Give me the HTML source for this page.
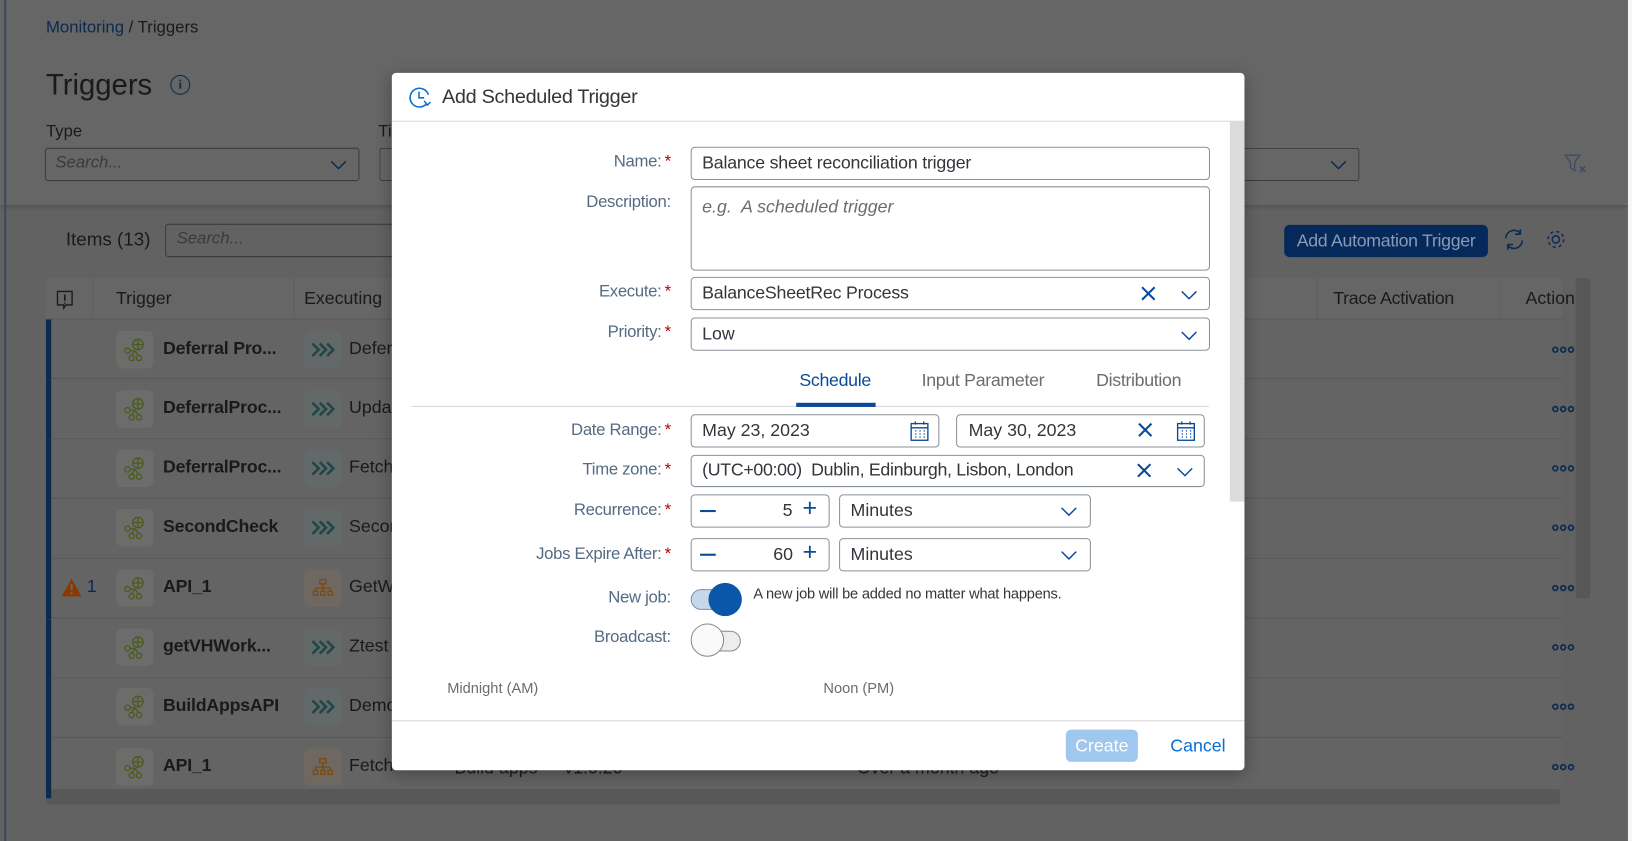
<!DOCTYPE html>
<html><head><meta charset="utf-8"><style>
*{box-sizing:border-box;margin:0;padding:0}
body{width:1632px;height:841px;overflow:hidden;background:#626262;font-family:"Liberation Sans",sans-serif}
#w{position:absolute;left:0;top:0;width:1562px;height:808px;transform:scale(1.0449,1.0408);transform-origin:0 0;background:#626262}
.a{position:absolute}
.t{position:absolute;white-space:nowrap}
.inp{position:absolute;border:1px solid #89919a;border-radius:4px;background:#fff}
.binp{position:absolute;border:1px solid #3a3d40;border-radius:3px}
.lbl{position:absolute;right:920px;font-size:16px;color:#556b82;text-align:right;white-space:nowrap;letter-spacing:-0.3px}
.lbl b{color:#bb0000;font-weight:normal;margin-left:3px}
.row{position:absolute;left:44px;width:1451px;height:57px;border-bottom:1px solid #5a5a5a;background:#646464}
.row .bar{position:absolute;left:0;top:0;width:5px;height:58px;background:#0a2a50}
.ic{position:absolute;width:36px;height:36px;border-radius:6px;background:#6c6c6a}
.nm{position:absolute;font-size:17px;font-weight:bold;color:#1a1a1a;letter-spacing:-0.2px}
.ex{position:absolute;font-size:17px;color:#1a1a1a}
</style></head><body><div id="w">
<div class="a" style="left:0;top:0;width:1562px;height:197px;background:#666;box-shadow:0 2px 4px rgba(0,0,0,.15)"></div>
<div class="a" style="left:4px;top:0;width:2px;height:808px;background:#3c4a5c"></div>
<div class="a" style="left:1558px;top:0;width:4px;height:808px;background:#f5f6f7"></div>
<div class="t" style="left:44px;top:18px;font-size:16px;color:#0a2a50">Monitoring <span style="color:#1a1a1a">/ Triggers</span></div>
<div class="t" style="left:44px;top:66px;font-size:28px;color:#1a1a1a">Triggers</div>
<div class="a" style="left:163px;top:72px;width:19px;height:19px;border:1.5px solid #0a2a50;border-radius:50%;font:bold 12px 'Liberation Serif',serif;color:#0a2a50;text-align:center;line-height:16px">i</div>
<div class="t" style="left:44px;top:118px;font-size:16px;color:#1a1a1a">Type</div>
<div class="t" style="left:362px;top:118px;font-size:16px;color:#1a1a1a">Ti</div>
<div class="binp" style="left:43px;top:142px;width:301px;height:32px"></div>
<div class="t" style="left:53px;top:148px;font-size:16px;font-style:italic;color:#3a3a3a">Search...</div>
<svg class="a" style="left:316px;top:152px" width="16" height="12"><path d="M1 3l7 7 7-7" fill="none" stroke="#0a2a50" stroke-width="1.4"/></svg>
<div class="binp" style="left:363px;top:142px;width:20px;height:32px;border-right:none"></div>
<div class="binp" style="left:1150px;top:142px;width:151px;height:32px;border-left:none"></div>
<svg class="a" style="left:1273px;top:152px" width="16" height="12"><path d="M1 3l7 7 7-7" fill="none" stroke="#0a2a50" stroke-width="1.4"/></svg>
<svg class="a" style="left:1497px;top:147px" width="22" height="20"><path d="M1 2h14l-5 7v8l-4-3V9z" fill="none" stroke="#3a4a60" stroke-width="1.2"/><path d="M15 13l5 5M20 13l-5 5" stroke="#3a4a60" stroke-width="1.4"/></svg>
<div class="t" style="left:63px;top:220px;font-size:18px;color:#1a1a1a">Items (13)</div>
<div class="binp" style="left:158px;top:215px;width:230px;height:32px"></div>
<div class="t" style="left:169px;top:221px;font-size:16px;font-style:italic;color:#3a3a3a">Search...</div>
<div class="a" style="left:1229px;top:216px;width:195px;height:31px;background:#05295a;border-radius:5px;color:#8a9ab0;font-size:17px;text-align:center;line-height:31px;letter-spacing:-0.3px">Add Automation Trigger</div>
<svg class="a" style="left:1437px;top:218px" width="24" height="24"><path d="M4 11a8 8 0 0 1 14-5M20 13a8 8 0 0 1-14 5" fill="none" stroke="#0a2a50" stroke-width="1.5"/><path d="M18 2v5h-5M6 22v-5h5" fill="none" stroke="#0a2a50" stroke-width="1.5"/></svg>
<svg class="a" style="left:1478px;top:219px" width="22" height="22"><circle cx="11" cy="11" r="3.5" fill="none" stroke="#0a2a50" stroke-width="1.4"/><circle cx="11" cy="11" r="7.5" fill="none" stroke="#0a2a50" stroke-width="1.4" stroke-dasharray="3 2.9"/></svg>
<div class="a" style="left:44px;top:267px;width:1451px;height:40px;background:#666;border-bottom:1px solid #5a5a5a"></div>
<div class="a" style="left:88px;top:267px;width:1px;height:40px;background:#5e5e5e"></div>
<div class="a" style="left:281px;top:267px;width:1px;height:40px;background:#5e5e5e"></div>
<div class="a" style="left:1260px;top:267px;width:1px;height:40px;background:#5e5e5e"></div>
<div class="a" style="left:1435px;top:267px;width:1px;height:40px;background:#5e5e5e"></div>
<svg class="a" style="left:53px;top:278px" width="18" height="20"><path d="M2 2h14v13H10l-2 3v-3H2z" fill="none" stroke="#1a1a1a" stroke-width="1.3"/><path d="M9 5v6M9 12.5v1.2" stroke="#1a1a1a" stroke-width="1.6"/></svg>
<div class="t" style="left:111px;top:277px;font-size:17px;color:#1a1a1a">Trigger</div>
<div class="t" style="left:291px;top:277px;font-size:17px;color:#1a1a1a">Executing</div>
<div class="t" style="left:1276px;top:277px;font-size:17px;color:#1a1a1a;letter-spacing:-0.3px">Trace Activation</div>
<div class="a" style="left:1460px;top:267px;width:48px;height:40px;overflow:hidden"><div class="t" style="left:0;top:10px;font-size:17px;color:#1a1a1a">Actions</div></div>
<div class="a" style="left:1508px;top:267px;width:14px;height:308px;background:#575757;border-radius:3px"></div>
<div class="a" style="left:44px;top:759px;width:1449px;height:14px;background:#585858;border-radius:3px"></div>

<div class="row" style="top:307px"><div class="bar"></div></div>
<div class="row" style="top:365px"><div class="bar"></div></div>
<div class="row" style="top:422px"><div class="bar"></div></div>
<div class="row" style="top:480px"><div class="bar"></div></div>
<div class="row" style="top:537px"><div class="bar"></div></div>
<div class="row" style="top:595px"><div class="bar"></div></div>
<div class="row" style="top:652px"><div class="bar"></div></div>
<div class="row" style="top:709px;height:50px"><div class="bar"></div></div>

<div id="rows"></div>
<script>
var d=[["Deferral Pro...","Defer",0,336],["DeferralProc...","Upda",0,393],["DeferralProc...","Fetch",0,450],["SecondCheck","Secon",0,507],["API_1","GetW",1,565],["getVHWork...","Ztest",0,622],["BuildAppsAPI","Demo",0,679],["API_1","Fetch",1,737]];
var h="";d.forEach(function(r){var c=r[3];
h+='<div class="ic" style="left:111px;top:'+(c-18)+'px"></div><svg class="a" style="left:117px;top:'+(c-12)+'px" width="24" height="24" fill="none" stroke="#4a5a18" stroke-width="1.2"><circle cx="15" cy="7" r="5"/><path d="M10 7h10M15 2v10"/><circle cx="5" cy="13" r="2.5"/><circle cx="9" cy="20" r="2.5"/><circle cx="16" cy="20" r="2.5"/><path d="M7 13h5M12 13l-3 5M12 13l4 5"/></svg>';
h+='<div class="nm" style="left:156px;top:'+(c-11)+'px">'+r[0]+'</div>';
h+='<div class="ic" style="left:291px;top:'+(c-18)+'px;background:'+(r[2]?'#6e6860':'#636868')+'"></div>';
if(r[2])h+='<svg class="a" style="left:299px;top:'+(c-9)+'px" width="20" height="18" fill="none" stroke="#7a4a10" stroke-width="1.2"><rect x="7" y="1" width="6" height="4"/><path d="M10 5v4M3 9h14M3 9v3M10 9v3M17 9v3"/><rect x="1" y="12" width="4" height="4"/><rect x="8" y="12" width="4" height="4"/><rect x="15" y="12" width="4" height="4"/></svg>';
else h+='<svg class="a" style="left:297px;top:'+(c-8)+'px" width="24" height="16" fill="none" stroke="#1f4646" stroke-width="2.4"><path d="M2 2l6 6-6 6M9 2l6 6-6 6M16 2l6 6-6 6"/></svg>';
h+='<div class="ex" style="left:334px;top:'+(c-11)+'px">'+r[1]+'</div>';
h+='<svg class="a" style="left:1485px;top:'+(c-4)+'px" width="22" height="8" fill="none" stroke="#0a2a50" stroke-width="1.6"><circle cx="3.5" cy="4" r="2.3"/><circle cx="11" cy="4" r="2.3"/><circle cx="18.5" cy="4" r="2.3"/></svg>';});
document.getElementById("rows").innerHTML=h;
</script>
<svg class="a" style="left:58px;top:555px" width="21" height="19"><path d="M10.5 1L20 18H1z" fill="#8a3a00"/><path d="M10.5 6v6M10.5 14v2" stroke="#666" stroke-width="2"/></svg>
<div class="t" style="left:83px;top:554px;font-size:17px;color:#0a2a50">1</div>
<div class="t" style="left:435px;top:728px;font-size:17px;color:#1a1a1a">Build apps</div>
<div class="t" style="left:540px;top:728px;font-size:17px;color:#1a1a1a">v1.0.20</div>
<div class="t" style="left:820px;top:728px;font-size:17px;color:#1a1a1a">Over a month ago</div>

<!-- modal -->
<div class="a" style="left:375px;top:70px;width:816px;height:670px;background:#fff;border-radius:4px;box-shadow:0 4px 16px rgba(0,0,0,.3);overflow:hidden">
<div class="a" style="left:0;top:0;width:816px;height:47px;border-bottom:1px solid #d9d9d9"></div>
<svg class="a" style="left:16px;top:13px" width="22" height="22" fill="none" stroke="#0a6ed1" stroke-width="1.5"><path d="M17 17A9 9 0 1 1 19 8"/><path d="M10 5v6h5"/><path d="M15 14l3 4 3-3" /></svg>
<div class="t" style="left:48px;top:13px;font-size:19px;color:#32363a;letter-spacing:-0.3px">Add Scheduled Trigger</div>
<div class="a" style="left:802px;top:47px;width:14px;height:365px;background:#dcdcdc"></div>
<div class="a" style="left:0;top:622px;width:816px;height:1px;background:#d9d9d9"></div>
<div class="a" style="left:645px;top:631px;width:69px;height:31px;background:#9fc7ef;border-radius:5px;color:#fff;font-size:17px;text-align:center;line-height:31px">Create</div>
<div class="t" style="left:745px;top:637px;font-size:17px;color:#0a6ed1">Cancel</div>
</div>
<div class="lbl" style="top:147px">Name:<b>*</b></div>
<div class="lbl" style="top:186px;right:920px">Description:</div>
<div class="lbl" style="top:272px">Execute:<b>*</b></div>
<div class="lbl" style="top:311px">Priority:<b>*</b></div>
<div class="lbl" style="top:405px">Date Range:<b>*</b></div>
<div class="lbl" style="top:443px">Time zone:<b>*</b></div>
<div class="lbl" style="top:482px">Recurrence:<b>*</b></div>
<div class="lbl" style="top:524px">Jobs Expire After:<b>*</b></div>
<div class="lbl" style="top:566px">New job:</div>
<div class="lbl" style="top:604px">Broadcast:</div>
<div class="inp" style="left:661px;top:141px;width:497px;height:32px"></div>
<div class="t" style="left:672px;top:147px;font-size:17px;color:#32363a;letter-spacing:-0.2px">Balance sheet reconciliation trigger</div>
<div class="inp" style="left:661px;top:179px;width:497px;height:81px"></div>
<div class="t" style="left:672px;top:189px;font-size:17px;font-style:italic;color:#6a6d70">e.g.&nbsp; A scheduled trigger</div>
<div class="inp" style="left:661px;top:266px;width:497px;height:32px"></div>
<div class="t" style="left:672px;top:272px;font-size:17px;color:#32363a;letter-spacing:-0.2px">BalanceSheetRec Process</div>
<svg class="a" style="left:1091px;top:274px" width="16" height="16"><path d="M2 2l12 12M14 2L2 14" stroke="#0a4a9a" stroke-width="2"/></svg>
<svg class="a" style="left:1130px;top:277px" width="16" height="12"><path d="M1 3l7 7 7-7" fill="none" stroke="#0a4a9a" stroke-width="1.4"/></svg>
<div class="inp" style="left:661px;top:305px;width:497px;height:32px"></div>
<div class="t" style="left:672px;top:311px;font-size:17px;color:#32363a">Low</div>
<svg class="a" style="left:1130px;top:316px" width="16" height="12"><path d="M1 3l7 7 7-7" fill="none" stroke="#0a4a9a" stroke-width="1.4"/></svg>
<div class="t" style="left:765px;top:356px;font-size:17px;color:#0a4a9a;letter-spacing:-0.3px">Schedule</div>
<div class="t" style="left:882px;top:356px;font-size:17px;color:#6a6d70;letter-spacing:-0.3px">Input Parameter</div>
<div class="t" style="left:1049px;top:356px;font-size:17px;color:#6a6d70;letter-spacing:-0.3px">Distribution</div>
<div class="a" style="left:394px;top:390px;width:763px;height:1px;background:#d9d9d9"></div>
<div class="a" style="left:762px;top:387px;width:76px;height:4px;background:#0a4a9a"></div>
<div class="inp" style="left:661px;top:398px;width:238px;height:32px"></div>
<div class="t" style="left:672px;top:404px;font-size:17px;color:#32363a">May 23, 2023</div>
<div class="inp" style="left:915px;top:398px;width:238px;height:32px"></div>
<div class="t" style="left:927px;top:404px;font-size:17px;color:#32363a">May 30, 2023</div>
<svg class="a" style="left:1088px;top:405px" width="16" height="16"><path d="M2 2l12 12M14 2L2 14" stroke="#0a4a9a" stroke-width="2"/></svg>
<svg class="a" style="left:871px;top:404px" width="18" height="20" fill="none" stroke="#0a4a9a" stroke-width="1.3"><rect x="1" y="3" width="16" height="16"/><path d="M1 7h16M5 1v3M13 1v3"/><path d="M5 10h1M9 10h1M13 10h1M5 13h1M9 13h1M13 13h1M5 16h1M9 16h1M13 16h1" stroke-width="1.5"/></svg>
<svg class="a" style="left:1126px;top:404px" width="18" height="20" fill="none" stroke="#0a4a9a" stroke-width="1.3"><rect x="1" y="3" width="16" height="16"/><path d="M1 7h16M5 1v3M13 1v3"/><path d="M5 10h1M9 10h1M13 10h1M5 13h1M9 13h1M13 13h1M5 16h1M9 16h1M13 16h1" stroke-width="1.5"/></svg>
<div class="inp" style="left:661px;top:437px;width:492px;height:31px"></div>
<div class="t" style="left:672px;top:442px;font-size:17px;color:#32363a;letter-spacing:-0.3px">(UTC+00:00)&nbsp; Dublin, Edinburgh, Lisbon, London</div>
<svg class="a" style="left:1087px;top:444px" width="16" height="16"><path d="M2 2l12 12M14 2L2 14" stroke="#0a4a9a" stroke-width="2"/></svg>
<svg class="a" style="left:1126px;top:447px" width="16" height="12"><path d="M1 3l7 7 7-7" fill="none" stroke="#0a4a9a" stroke-width="1.4"/></svg>
<div class="inp" style="left:661px;top:475px;width:133px;height:32px"></div>
<div class="a" style="left:670px;top:490px;width:15px;height:2px;background:#0a4a9a"></div>
<div class="t" style="left:749px;top:481px;font-size:17px;color:#32363a">5</div>
<div class="t" style="left:768px;top:477px;font-size:24px;color:#0a4a9a;line-height:24px">+</div>
<div class="inp" style="left:803px;top:475px;width:241px;height:32px"></div>
<div class="t" style="left:814px;top:481px;font-size:17px;color:#32363a">Minutes</div>
<svg class="a" style="left:1015px;top:485px" width="16" height="12"><path d="M1 3l7 7 7-7" fill="none" stroke="#0a4a9a" stroke-width="1.4"/></svg>
<div class="inp" style="left:661px;top:517px;width:133px;height:32px"></div>
<div class="a" style="left:670px;top:532px;width:15px;height:2px;background:#0a4a9a"></div>
<div class="t" style="left:740px;top:523px;font-size:17px;color:#32363a">60</div>
<div class="t" style="left:768px;top:519px;font-size:24px;color:#0a4a9a;line-height:24px">+</div>
<div class="inp" style="left:803px;top:517px;width:241px;height:32px"></div>
<div class="t" style="left:814px;top:523px;font-size:17px;color:#32363a">Minutes</div>
<svg class="a" style="left:1015px;top:527px" width="16" height="12"><path d="M1 3l7 7 7-7" fill="none" stroke="#0a4a9a" stroke-width="1.4"/></svg>
<div class="a" style="left:661px;top:566px;width:46px;height:20px;border-radius:10px;background:#c6d7ea;border:1px solid #7a8fa8"></div>
<div class="a" style="left:678px;top:560px;width:32px;height:32px;border-radius:50%;background:#0a56a8"></div>
<div class="t" style="left:721px;top:562px;font-size:14px;color:#32363a;letter-spacing:-0.2px">A new job will be added no matter what happens.</div>
<div class="a" style="left:670px;top:606px;width:39px;height:20px;border-radius:10px;background:#ededed;border:1px solid #8a8a8a"></div>
<div class="a" style="left:661px;top:599px;width:32px;height:32px;border-radius:50%;background:#fafafa;border:1px solid #8a8a8a"></div>
<div class="t" style="left:428px;top:653px;font-size:14px;color:#6a6d70">Midnight (AM)</div>
<div class="t" style="left:788px;top:653px;font-size:14px;color:#6a6d70">Noon (PM)</div>
</div></body></html>
